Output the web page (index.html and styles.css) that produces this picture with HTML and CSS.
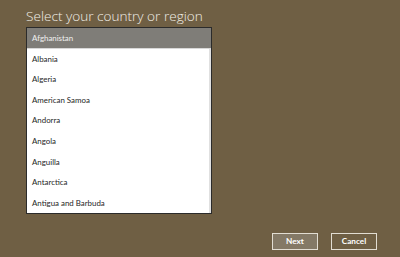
FILE: index.html
```html
<!DOCTYPE html>
<html>
<head>
<meta charset="utf-8">
<link rel="stylesheet" href="styles.css">
</head>
<body>
<div class="page">
  <h1 class="title">Select your country or region</h1>
  <div class="list">
    <div class="item selected">Afghanistan</div>
    <div class="item">Albania</div>
    <div class="item">Algeria</div>
    <div class="item">American Samoa</div>
    <div class="item">Andorra</div>
    <div class="item">Angola</div>
    <div class="item">Anguilla</div>
    <div class="item">Antarctica</div>
    <div class="item">Antigua and Barbuda</div>
  </div>
  <div class="actions">
    <button class="btn primary">Next</button>
    <button class="btn">Cancel</button>
  </div>
</div>
</body>
</html>
```
FILE: styles.css
```css
html, body {
  margin: 0;
  padding: 0;
  background: #6f5f44;
}
.page {
  width: 400px;
  height: 257px;
  box-sizing: border-box;
  padding: 6px 0 0 26px;
  font-family: "Open Sans", "Noto Sans", sans-serif;
}
.title {
  margin: 0;
  font-weight: 300;
  font-size: 13.6px;
  line-height: 20px;
  color: #f2efe8;
  letter-spacing: 0;
}
.list {
  margin-top: 1px;
  width: 186px;
  box-sizing: border-box;
  border: 1px solid #2b2b2b;
  background: #ffffff;
  box-shadow: inset -2px 0 0 #e0e0e0;
}
.item {
  height: 20.6px;
  line-height: 20.6px;
  padding-left: 5px;
  font-family: "Lato", "Open Sans", sans-serif;
  font-size: 7.9px;
  color: #262626;
  white-space: nowrap;
}
.item.selected {
  background: #7f7d78;
  color: #f0f0f0;
  border-bottom: 1px solid #d8d8d8;
  height: 19.6px;
  line-height: 20px;
}
.actions {
  display: flex;
  gap: 13px;
  margin-top: 19px;
  margin-left: 246px;
}
.btn {
  width: 46px;
  height: 17px;
  box-sizing: border-box;
  border: 1.5px solid #e2ddd2;
  background: transparent;
  color: #ffffff;
  font-family: "Lato", "Open Sans", sans-serif;
  font-weight: 700;
  font-size: 8.2px;
  padding: 0;
  line-height: 13px;
}
.btn.primary {
  background: #847966;
}
```
